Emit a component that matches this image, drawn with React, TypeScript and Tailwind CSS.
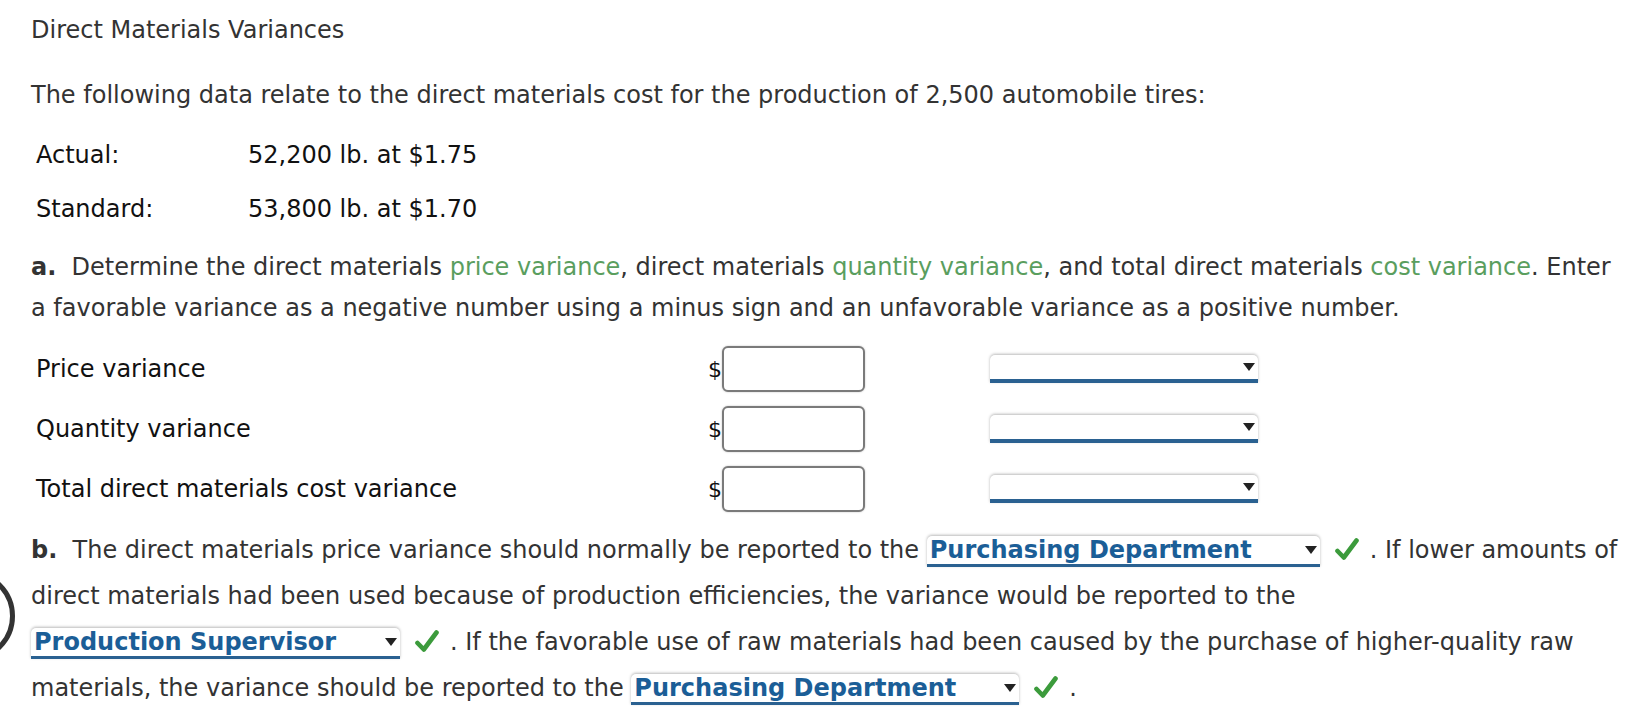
import React from "react";

const green = "text-[#5a9e5e]";

function Caret() {
  return (
    <svg width="12" height="8" viewBox="0 0 12 8" className="shrink-0">
      <path d="M0 0 H12 L6 8 Z" fill="#222" />
    </svg>
  );
}

function Check() {
  return (
    <svg width="24" height="23" viewBox="0 0 24 23" className="ml-[15px] mr-[11px] inline-block align-[-3px]">
      <path
        d="M2.5 13 L8.8 19.5 L21.5 2.5"
        fill="none"
        stroke="#3c9b3c"
        strokeWidth="4.6"
        strokeLinecap="round"
        strokeLinejoin="round"
      />
    </svg>
  );
}

function EmptySelect() {
  return (
    <div className="flex h-[28px] w-[268px] items-center justify-end rounded-t-[5px] border-b-[4px] border-[#2a6191] bg-white pr-[3px] shadow-[0_-1px_3px_rgba(0,0,0,0.28)]">
      <Caret />
    </div>
  );
}

function Answer({ text, width }: { text: string; width: string }) {
  return (
    <span
      className={`inline-flex h-[31px] ${width} items-center justify-between rounded-t-[5px] border-b-[3px] border-[#2a6191] bg-white pl-[3px] pr-[3px] align-middle font-bold leading-none text-[#1b5e97] shadow-[0_-1px_3px_rgba(0,0,0,0.28)]`}
    >
      <span>{text}</span>
      <Caret />
    </span>
  );
}

const rows = ["Price variance", "Quantity variance", "Total direct materials cost variance"];

export default function App() {
  return (
    <div
      className="relative min-h-[722px] w-[1628px] overflow-hidden bg-white pl-[31px] pt-[16px] text-[24px] text-[#333]"
      style={{ fontFamily: '"DejaVu Sans", Verdana, sans-serif' }}
    >
      <div className="pointer-events-none absolute left-[-77px] top-[570px] h-[92px] w-[92px] rounded-full border-[5px] border-[#333]" />

      <div className="leading-[28px]">Direct Materials Variances</div>

      <p className="mt-[37px] leading-[28px]">
        The following data relate to the direct materials cost for the production of 2,500 automobile tires:
      </p>

      <div className="mt-[19px] text-[#111]">
        {[
          ["Actual:", "52,200 lb. at $1.75"],
          ["Standard:", "53,800 lb. at $1.70"],
        ].map(([k, v]) => (
          <div key={k} className="flex h-[54px] items-center">
            <div className="w-[217px] pl-[5px]">{k}</div>
            <div>{v}</div>
          </div>
        ))}
      </div>

      <p className="mt-[11px] w-[1590px] leading-[41px]">
        <b>a.</b>&nbsp; Determine the direct materials <span className={green}>price variance</span>, direct
        materials <span className={green}>quantity variance</span>, and total direct materials{" "}
        <span className={green}>cost variance</span>. Enter a favorable variance as a negative number using a
        minus sign and an unfavorable variance as a positive number.
      </p>

      <div className="mt-[10px] text-[#111]">
        {rows.map((r) => (
          <div key={r} className="flex h-[60px] items-center">
            <div className="w-[677px] pl-[5px]">{r}</div>
            <span className="text-[22px]">$</span>
            <div className="h-[46px] w-[143px] rounded-[6px] border-2 border-[#7a7a7a] bg-white shadow-[0_0_2px_rgba(0,0,0,0.25)]" />
            <div className="ml-[125px]">
              <EmptySelect />
            </div>
          </div>
        ))}
      </div>

      <p className="mt-[8px] w-[1592px] leading-[46px]">
        <b>b.</b>&nbsp; The direct materials price variance should normally be reported to the{" "}
        <Answer text="Purchasing Department" width="w-[393px]" />
        <Check />. If lower amounts of direct materials had been used because of production efficiencies, the
        variance would be reported to the <Answer text="Production Supervisor" width="w-[369px]" />
        <Check />. If the favorable use of raw materials had been caused by the purchase of higher-quality raw
        materials, the variance should be reported to the{" "}
        <Answer text="Purchasing Department" width="w-[388px]" />
        <Check />.
      </p>
    </div>
  );
}
